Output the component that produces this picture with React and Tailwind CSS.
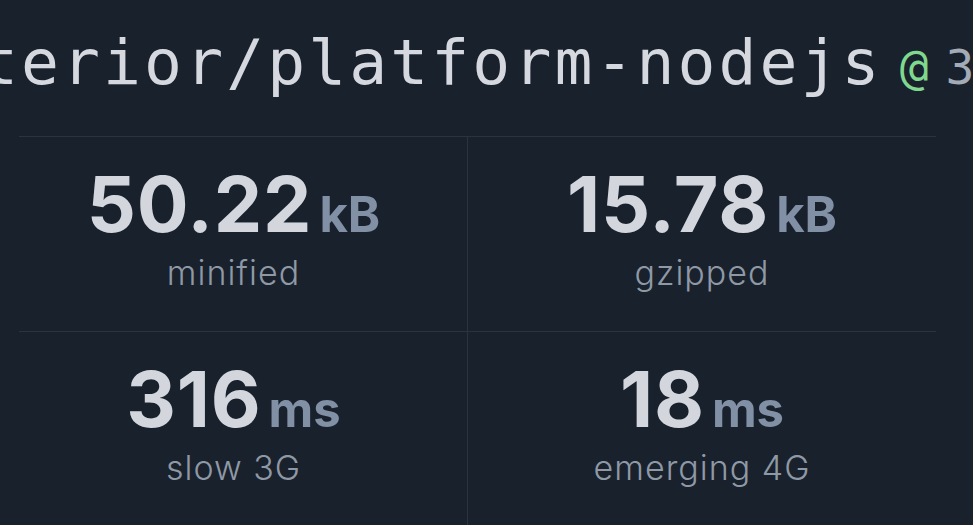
import React from "react";

const mono = { fontFamily: '"DejaVu Sans Mono", "Liberation Mono", monospace' };

function Stat({ value, unit, label }) {
  return (
    <div className="flex h-[194px] flex-col items-center pt-[29px] font-['Inter',sans-serif]">
      <div className="flex items-baseline leading-none">
        <span className="text-[77px] font-bold tracking-[0.8px] text-[#d3d7dd]">{value}</span>
        <span className="ml-[7px] text-[49px] font-bold text-[#8190a5]">{unit}</span>
      </div>
      <div className="mt-[13px] text-[34px] font-light leading-none tracking-[1px] text-[#8f99a6]">
        {label}
      </div>
    </div>
  );
}

export default function App() {
  return (
    <div className="h-[525px] w-[973px] overflow-hidden bg-[#19212d]">
      <div className="h-[136px] pt-[31px]">
        <div className="ml-[-20px] flex items-baseline whitespace-nowrap leading-none" style={mono}>
          <span className="text-[63px] tracking-[3.1px] text-[#d5d9df]">terior/platform-nodejs</span>
          <span className="ml-[17px] text-[48px] text-[#7fd88e]">@</span>
          <span className="ml-[17px] text-[48px] text-[#a3abb6]">3</span>
        </div>
      </div>
      <div className="ml-[19px] h-px w-[917px] bg-[#2a3441]" />
      <div className="flex w-[936px]">
        <div className="w-[468px] border-r border-[#2a3441]">
          <Stat value="50.22" unit="kB" label="minified" />
          <div className="ml-[19px] h-px bg-[#2a3441]" />
          <Stat value="316" unit="ms" label="slow 3G" />
        </div>
        <div className="flex-1">
          <Stat value="15.78" unit="kB" label="gzipped" />
          <div className="h-px bg-[#2a3441]" />
          <Stat value="18" unit="ms" label="emerging 4G" />
        </div>
      </div>
    </div>
  );
}
